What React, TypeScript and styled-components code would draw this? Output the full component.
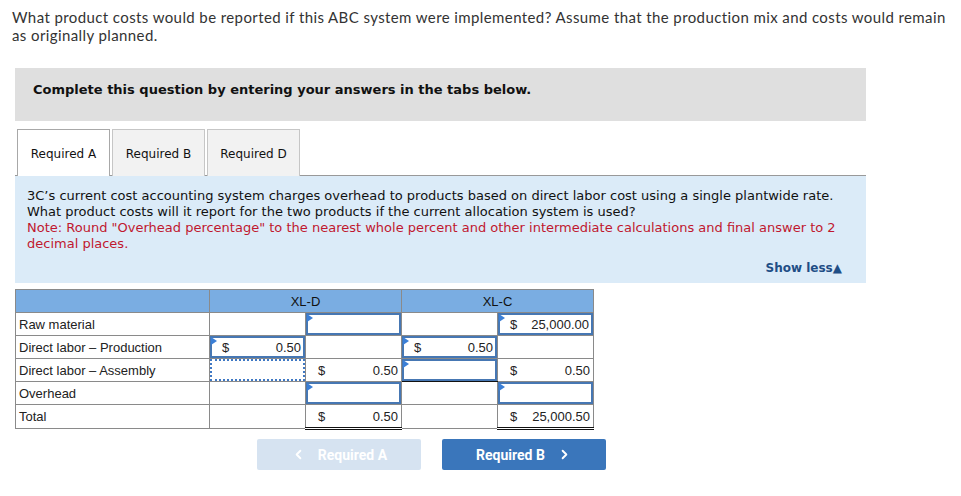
import React from 'react';
import styled, { createGlobalStyle, css } from 'styled-components';
import { ChevronLeft, ChevronRight } from 'lucide-react';

const GlobalStyle = createGlobalStyle`
  html, body {
    margin: 0;
    padding: 0;
    background: #ffffff;
  }
`;

const Page = styled.div`
  padding: 8px 0 0 12px;
  width: 961px;
  box-sizing: border-box;
`;

const Question = styled.p`
  margin: 0;
  width: 942px;
  font-family: 'Lato', 'Open Sans', sans-serif;
  font-size: 15px;
  letter-spacing: 0.4px;
  line-height: 18px;
  color: #333;
`;

const Instruction = styled.div`
  margin: 24px 0 0 3px;
  width: 851px;
  height: 53px;
  box-sizing: border-box;
  background: #dfdfdf;
  padding: 14px 0 0 18px;
  font-family: 'DejaVu Sans', Verdana, sans-serif;
  font-weight: bold;
  font-size: 13px;
  line-height: 16px;
  color: #111;
`;

const Tabs = styled.div`
  display: flex;
  gap: 2px;
  margin: 8px 0 0 5px;
`;

const Tab = styled.div<{ $active?: boolean }>`
  width: 93px;
  height: 47px;
  box-sizing: border-box;
  display: flex;
  align-items: center;
  justify-content: center;
  padding-top: 2px;
  font-family: 'DejaVu Sans', Verdana, sans-serif;
  font-size: 12px;
  color: #111;
  border: 1px solid #c6c6c6;
  border-bottom: none;
  background: #f2f2f2;
  margin-bottom: -1px;
  position: relative;
  ${(p) =>
    p.$active &&
    css`
      background: #ffffff;
      border-color: #a8a8a8;
      z-index: 1;
    `}
`;

const Panel = styled.div`
  margin-left: 3px;
  width: 851px;
  height: 108px;
  box-sizing: border-box;
  border-top: 1px solid #999;
  background: #dbebf8;
  padding: 12px 24px 0 12px;
  font-family: 'DejaVu Sans', Verdana, sans-serif;
  font-size: 13px;
  line-height: 16px;
  color: #111;
  display: flex;
  flex-direction: column;
`;

const Note = styled.span`
  color: #c0182f;
`;

const ShowLess = styled.div`
  margin-top: auto;
  margin-bottom: 7px;
  align-self: flex-end;
  font-weight: bold;
  font-size: 12px;
  color: #1f4e86;
`;

const Sheet = styled.table`
  margin: 6px 0 0 3px;
  border-collapse: collapse;
  font-family: 'Liberation Sans', Arial, sans-serif;
  font-size: 13px;
  color: #222;
  table-layout: fixed;
`;

const HeadCell = styled.th`
  background: #7aade2;
  border: 1px solid #8a8a8a;
  height: 22px;
  padding: 0;
  font-weight: normal;
  font-size: 13px;
  color: #111;
  text-align: center;
`;

const LabelCell = styled.td`
  border: 1px solid #8a8a8a;
  height: 22px;
  padding: 0 0 0 3px;
  width: 190px;
`;

const Cell = styled.td<{ $topDark?: boolean; $bottomDark?: boolean; $double?: boolean }>`
  border: 1px solid #8a8a8a;
  height: 22px;
  padding: 0;
  width: 95px;
  ${(p) => p.$topDark && css`border-top: 1px solid #111;`}
  ${(p) => p.$bottomDark && css`border-bottom: 1px solid #111;`}
  ${(p) => p.$double && css`border-bottom: 3px double #111;`}
`;

const Amount = styled.div`
  height: 22px;
  box-sizing: border-box;
  display: flex;
  align-items: center;
  justify-content: space-between;
  padding: 0 3px 0 12px;
`;

const InputBox = styled.div<{ $dotted?: boolean }>`
  position: relative;
  height: 22px;
  box-sizing: border-box;
  border: 2px solid #4677b3;
  display: flex;
  align-items: center;
  justify-content: space-between;
  padding: 0 2px 0 10px;
  ${(p) =>
    p.$dotted &&
    css`
      border: 2px dotted #3f78c4;
    `}
`;

const Marker = styled.span`
  position: absolute;
  top: -1px;
  left: -1px;
  width: 0;
  height: 0;
  border-top: 4px solid transparent;
  border-bottom: 4px solid transparent;
  border-left: 6px solid #3b7fd6;
`;

const Nav = styled.div`
  display: flex;
  gap: 21px;
  margin: 9px 0 0 245px;
`;

const NavButton = styled.button<{ $disabled?: boolean }>`
  width: 164px;
  height: 31px;
  border: none;
  border-radius: 2px;
  display: flex;
  align-items: center;
  justify-content: center;
  gap: 12px;
  font-family: 'Roboto', 'Liberation Sans', sans-serif;
  font-weight: bold;
  font-size: 14px;
  color: #ffffff;
  background: ${(p) => (p.$disabled ? '#d6e3f1' : '#3a76bb')};
  cursor: ${(p) => (p.$disabled ? 'default' : 'pointer')};
`;

type Val = { v?: string; input?: boolean; dotted?: boolean };

const ValueCell: React.FC<{ d: Val; topDark?: boolean; bottomDark?: boolean; double?: boolean }> = ({
  d,
  topDark,
  bottomDark,
  double,
}) => {
  const content = d.v ? (
    <>
      <span>$</span>
      <span>{d.v}</span>
    </>
  ) : null;
  return (
    <Cell $topDark={topDark} $bottomDark={bottomDark} $double={double}>
      {d.input || d.dotted ? (
        <InputBox $dotted={d.dotted}>
          {d.input && <Marker />}
          {content}
        </InputBox>
      ) : (
        <Amount>{content}</Amount>
      )}
    </Cell>
  );
};

export default function App() {
  return (
    <Page>
      <GlobalStyle />
      <Question>
        What product costs would be reported if this ABC system were implemented? Assume that the production mix and
        costs would remain as originally planned.
      </Question>
      <Instruction>Complete this question by entering your answers in the tabs below.</Instruction>
      <Tabs>
        <Tab $active>Required A</Tab>
        <Tab>Required B</Tab>
        <Tab>Required D</Tab>
      </Tabs>
      <Panel>
        <div>
          3C’s current cost accounting system charges overhead to products based on direct labor cost using a single
          plantwide rate. What product costs will it report for the two products if the current allocation system is
          used?
        </div>
        <Note>
          Note: Round "Overhead percentage" to the nearest whole percent and other intermediate calculations and final
          answer to 2 decimal places.
        </Note>
        <ShowLess>Show less▲</ShowLess>
      </Panel>
      <Sheet>
        <thead>
          <tr>
            <HeadCell />
            <HeadCell colSpan={2}>XL-D</HeadCell>
            <HeadCell colSpan={2}>XL-C</HeadCell>
          </tr>
        </thead>
        <tbody>
          <tr>
            <LabelCell>Raw material</LabelCell>
            <ValueCell d={{}} />
            <ValueCell d={{ input: true }} />
            <ValueCell d={{}} />
            <ValueCell d={{ input: true, v: '25,000.00' }} />
          </tr>
          <tr>
            <LabelCell>Direct labor – Production</LabelCell>
            <ValueCell d={{ input: true, v: '0.50' }} />
            <ValueCell d={{}} />
            <ValueCell d={{ input: true, v: '0.50' }} />
            <ValueCell d={{}} />
          </tr>
          <tr>
            <LabelCell>Direct labor – Assembly</LabelCell>
            <ValueCell d={{ dotted: true }} />
            <ValueCell d={{ v: '0.50' }} />
            <ValueCell d={{ input: true }} bottomDark />
            <ValueCell d={{ v: '0.50' }} />
          </tr>
          <tr>
            <LabelCell>Overhead</LabelCell>
            <ValueCell d={{}} />
            <ValueCell d={{ input: true }} />
            <ValueCell d={{}} topDark />
            <ValueCell d={{ input: true }} />
          </tr>
          <tr>
            <LabelCell>Total</LabelCell>
            <ValueCell d={{}} />
            <ValueCell d={{ v: '0.50' }} topDark double />
            <ValueCell d={{}} />
            <ValueCell d={{ v: '25,000.50' }} topDark double />
          </tr>
        </tbody>
      </Sheet>
      <Nav>
        <NavButton $disabled>
          <ChevronLeft size={15} strokeWidth={3} />
          Required A
        </NavButton>
        <NavButton>
          Required B
          <ChevronRight size={15} strokeWidth={3} />
        </NavButton>
      </Nav>
    </Page>
  );
}
